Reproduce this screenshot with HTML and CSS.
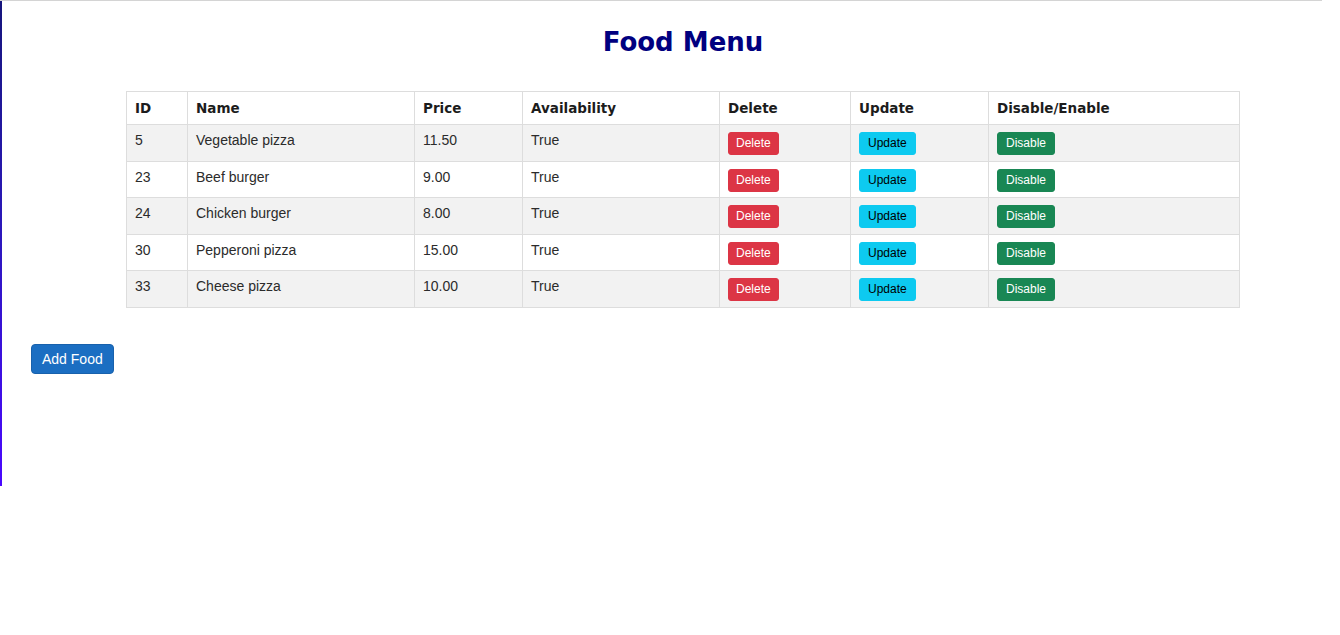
FILE: index.html
```html
<!DOCTYPE html>
<html>
<head>
  <meta charset="UTF-8">
  <title>Food Menu</title>
  <link rel="stylesheet" href="styles.css">
</head>
<body>
  <div class="app">
    <div class="sidebar"></div>
    <div class="content">
      <div class="menu">
        <h1 class="title">Food Menu</h1>
        <table class="food-table">
          <colgroup>
            <col class="col-id">
            <col class="col-name">
            <col class="col-price">
            <col class="col-avail">
            <col class="col-delete">
            <col class="col-update">
            <col class="col-toggle">
          </colgroup>
          <thead>
            <tr>
              <th>ID</th>
              <th>Name</th>
              <th>Price</th>
              <th>Availability</th>
              <th>Delete</th>
              <th>Update</th>
              <th>Disable/Enable</th>
            </tr>
          </thead>
          <tbody>
            <tr>
              <td>5</td>
              <td>Vegetable pizza</td>
              <td>11.50</td>
              <td>True</td>
              <td><button class="btn btn-delete">Delete</button></td>
              <td><button class="btn btn-update">Update</button></td>
              <td><button class="btn btn-toggle">Disable</button></td>
            </tr>
            <tr>
              <td>23</td>
              <td>Beef burger</td>
              <td>9.00</td>
              <td>True</td>
              <td><button class="btn btn-delete">Delete</button></td>
              <td><button class="btn btn-update">Update</button></td>
              <td><button class="btn btn-toggle">Disable</button></td>
            </tr>
            <tr>
              <td>24</td>
              <td>Chicken burger</td>
              <td>8.00</td>
              <td>True</td>
              <td><button class="btn btn-delete">Delete</button></td>
              <td><button class="btn btn-update">Update</button></td>
              <td><button class="btn btn-toggle">Disable</button></td>
            </tr>
            <tr>
              <td>30</td>
              <td>Pepperoni pizza</td>
              <td>15.00</td>
              <td>True</td>
              <td><button class="btn btn-delete">Delete</button></td>
              <td><button class="btn btn-update">Update</button></td>
              <td><button class="btn btn-toggle">Disable</button></td>
            </tr>
            <tr>
              <td>33</td>
              <td>Cheese pizza</td>
              <td>10.00</td>
              <td>True</td>
              <td><button class="btn btn-delete">Delete</button></td>
              <td><button class="btn btn-update">Update</button></td>
              <td><button class="btn btn-toggle">Disable</button></td>
            </tr>
          </tbody>
        </table>
      </div>
      <button class="add-btn">Add Food</button>
    </div>
  </div>
</body>
</html>
```

FILE: styles.css
```css
body {
  margin: 0;
  background: white;
  font-family: 'Liberation Sans', Arial, sans-serif;
  color: #333;
}
.app {
  display: flex;
  width: 1322px;
  height: 486px;
  border-top: 1px solid #d4d4d4;
  box-sizing: border-box;
}
.sidebar {
  width: 2px;
  background: linear-gradient(180deg, #16157c 0%, #2a18b8 45%, #4a08ff 100%);
}
.content {
  flex: 1;
  padding: 26px 0 0 29px;
}
.menu {
  width: 1114px;
  margin-left: 95px;
}
.title {
  margin: 0 0 34px;
  text-align: center;
  font-family: 'DejaVu Sans', Verdana, sans-serif;
  font-size: 26px;
  line-height: 30px;
  font-weight: bold;
  color: #000080;
}
.food-table {
  width: 100%;
  border-collapse: collapse;
  table-layout: fixed;
  border: 1px solid #ddd;
}
.col-id { width: 61px; }
.col-name { width: 227px; }
.col-price { width: 108px; }
.col-avail { width: 197px; }
.col-delete { width: 131px; }
.col-update { width: 138px; }
.food-table th {
  padding: 8px;
  border: 1px solid #ddd;
  text-align: left;
  font-family: 'DejaVu Sans', Verdana, sans-serif;
  font-size: 13.5px;
  line-height: 16px;
  font-weight: bold;
  color: #1c1c1c;
  background: white;
}
.food-table td {
  padding: 7px 8px 5.6px;
  border: 1px solid #ddd;
  font-size: 14px;
  line-height: 17px;
  vertical-align: top;
  color: #2b2b2b;
}
.food-table tbody tr:nth-child(odd) {
  background: #f2f2f2;
}
.btn {
  display: inline-block;
  vertical-align: top;
  height: 23px;
  padding: 0 7px;
  border: 1px solid transparent;
  border-radius: 3px;
  font-family: 'Liberation Sans', Arial, sans-serif;
  font-size: 12px;
  line-height: 21px;
  cursor: pointer;
}
.btn-delete {
  background: #dc3545;
  border-color: #dc3545;
  color: white;
}
.btn-update {
  padding: 0 8px;
  background: #0dcaf0;
  border-color: #0dcaf0;
  color: #000;
}
.btn-toggle {
  padding: 0 8px;
  background: #198754;
  border-color: #198754;
  color: white;
}
.add-btn {
  margin-top: 36.5px;
  height: 30px;
  padding: 0 10px;
  border: 1px solid #1861ac;
  border-radius: 4px;
  background: #1b6ec2;
  color: white;
  font-family: 'Liberation Sans', Arial, sans-serif;
  font-size: 14px;
  line-height: 28px;
  cursor: pointer;
}
```
